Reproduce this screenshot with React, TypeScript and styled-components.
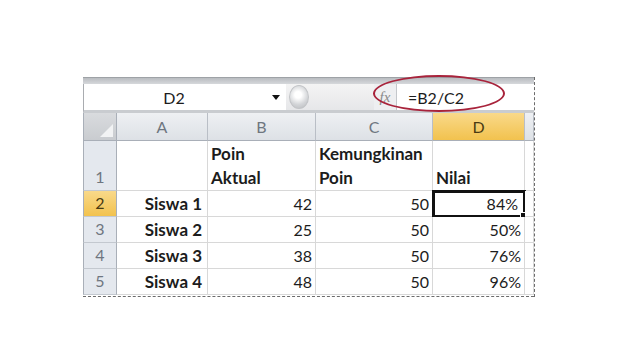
import React from "react";
import styled, { createGlobalStyle } from "styled-components";

const GlobalStyle = createGlobalStyle`
  html, body {
    margin: 0;
    padding: 0;
    background: #ffffff;
  }
  body {
    font-family: Lato, "Open Sans", sans-serif;
  }
`;

const Page = styled.div`
  width: 640px;
  height: 360px;
  padding: 77px 0 0 83px;
  box-sizing: border-box;
`;

const Sheet = styled.div`
  position: relative;
  width: 451px;
  border-right: 1px dashed #6b6b6b;
  display: flex;
  flex-direction: column;
`;

const TopBand = styled.div`
  height: 6px;
  background: linear-gradient(#b9bcc0, #d6d8db);
  border-top: 1px solid #9ea2a6;
`;

const FormulaBar = styled.div`
  display: flex;
  height: 26px;
  align-items: stretch;
  border-bottom: 3px solid #c9ccd0;
  border-left: 1px solid #a9acb0;
`;

const NameBox = styled.div`
  width: 202px;
  position: relative;
  background: #fff;
  display: flex;
  align-items: center;
  justify-content: center;
  font-size: 16px;
  color: #1c1c1c;
  padding-right: 22px;
  box-sizing: border-box;
`;

const DropArrow = styled.span`
  position: absolute;
  right: 6px;
  top: 11px;
  width: 0;
  height: 0;
  border-left: 4px solid transparent;
  border-right: 4px solid transparent;
  border-top: 5px solid #111;
`;

const Grip = styled.div`
  width: 88px;
  background: linear-gradient(#f4f4f4, #e6e7e9);
  display: flex;
  align-items: center;
  padding-left: 3px;
  box-sizing: border-box;
`;

const Knob = styled.div`
  width: 18px;
  height: 22px;
  border-radius: 50%;
  background: radial-gradient(circle at 45% 40%, #ffffff 0 20%, #d2d4d7 60%, #b8babd 100%);
  border: 1px solid #c2c4c7;
`;

const Fx = styled.div`
  width: 22px;
  display: flex;
  align-items: center;
  justify-content: center;
  background: #eeeff1;
  font-family: "Liberation Serif", serif;
  font-style: italic;
  font-size: 15px;
  color: #8a8a8a;
`;

const FormulaInput = styled.div`
  flex: 1;
  background: #fff;
  border-left: 1px solid #c4c7cb;
  display: flex;
  align-items: center;
  padding-left: 11px;
  font-size: 16px;
  color: #1c1c1c;
`;

const Ring = styled.div`
  position: absolute;
  left: 290px;
  top: -2px;
  width: 132px;
  height: 37px;
  border: 2px solid #a8233b;
  border-radius: 50%;
  box-sizing: border-box;
  pointer-events: none;
`;

const Grid = styled.div`
  display: grid;
  grid-template-columns: 34px 91px 108px 117px 92px 9px;
  grid-template-rows: 28px 50px 26px 26px 26px 26px;
  border-bottom: 1px dashed #6b6b6b;
  padding-bottom: 1px;
`;

const ColHead = styled.div<{ $active?: boolean }>`
  display: flex;
  align-items: center;
  justify-content: center;
  font-size: 16px;
  color: ${(p) => (p.$active ? "#4a3b12" : "#6f7680")};
  background: ${(p) =>
    p.$active
      ? "linear-gradient(#f9d98a, #f2c24e)"
      : "linear-gradient(#eef0f3, #dde1e6)"};
  border-right: 1px solid #b9bec6;
  border-bottom: 1px solid #a9afb8;
`;

const Corner = styled.div`
  position: relative;
  background: linear-gradient(#d9dbde, #c9ccd0);
  border-right: 1px solid #a9afb8;
  border-bottom: 1px solid #a9afb8;
  border-left: 1px solid #a9afb8;
  &::after {
    content: "";
    position: absolute;
    right: 3px;
    bottom: 3px;
    width: 0;
    height: 0;
    border-left: 13px solid transparent;
    border-bottom: 13px solid #f2f3f4;
  }
`;

const RowHead = styled.div<{ $active?: boolean }>`
  display: flex;
  align-items: flex-end;
  justify-content: center;
  padding-bottom: 1px;
  box-sizing: border-box;
  font-size: 16px;
  line-height: 24px;
  color: ${(p) => (p.$active ? "#4a3b12" : "#6f7680")};
  background: ${(p) =>
    p.$active ? "linear-gradient(#f9d98a, #f2c24e)" : "#e4e8ee"};
  border-left: 1px solid #a9afb8;
  border-right: 1px solid #a9afb8;
  border-bottom: 1px solid #c3c8cf;
`;

const Cell = styled.div<{ $align?: "left" | "right"; $bold?: boolean; $selected?: boolean }>`
  position: relative;
  display: flex;
  flex-direction: column;
  justify-content: flex-end;
  align-items: ${(p) => (p.$align === "left" ? "flex-start" : "flex-end")};
  padding: 0 ${(p) => (p.$bold ? "5px" : "3px")} 0 3px;
  box-sizing: border-box;
  font-size: ${(p) => (p.$bold ? "17px" : "16px")};
  line-height: 24px;
  font-weight: ${(p) => (p.$bold ? 700 : 400)};
  color: #1c1c1c;
  background: #fff;
  border-right: 1px solid #d8d8d8;
  border-bottom: 1px solid #d8d8d8;
  ${(p) =>
    p.$selected &&
    `
    outline: 3px solid #111;
    outline-offset: -2px;
    padding-right: 6px;
    &::after {
      content: "";
      position: absolute;
      right: -4px;
      bottom: -4px;
      width: 6px;
      height: 6px;
      background: #111;
      border: 1px solid #fff;
    }
  `}
`;

const rows = [
  { n: "2", name: "Siswa 1", b: "42", c: "50", d: "84%" },
  { n: "3", name: "Siswa 2", b: "25", c: "50", d: "50%" },
  { n: "4", name: "Siswa 3", b: "38", c: "50", d: "76%" },
  { n: "5", name: "Siswa 4", b: "48", c: "50", d: "96%" },
];

export default function App() {
  return (
    <Page>
      <GlobalStyle />
      <Sheet>
        <TopBand />
        <FormulaBar>
          <NameBox>
            D2
            <DropArrow />
          </NameBox>
          <Grip>
            <Knob />
          </Grip>
          <Fx>fx</Fx>
          <FormulaInput>=B2/C2</FormulaInput>
        </FormulaBar>
        <Ring />
        <Grid>
          <Corner />
          <ColHead>A</ColHead>
          <ColHead>B</ColHead>
          <ColHead>C</ColHead>
          <ColHead $active>D</ColHead>
          <ColHead />

          <RowHead>1</RowHead>
          <Cell $align="left" />
          <Cell $align="left" $bold>
            <span>Poin</span>
            <span>Aktual</span>
          </Cell>
          <Cell $align="left" $bold>
            <span>Kemungkinan</span>
            <span>Poin</span>
          </Cell>
          <Cell $align="left" $bold>
            <span>Nilai</span>
          </Cell>
          <Cell />

          {rows.map((r, i) => (
            <React.Fragment key={r.n}>
              <RowHead $active={i === 0}>{r.n}</RowHead>
              <Cell $bold>{r.name}</Cell>
              <Cell>{r.b}</Cell>
              <Cell>{r.c}</Cell>
              <Cell $selected={i === 0}>{r.d}</Cell>
              <Cell />
            </React.Fragment>
          ))}
        </Grid>
      </Sheet>
    </Page>
  );
}
